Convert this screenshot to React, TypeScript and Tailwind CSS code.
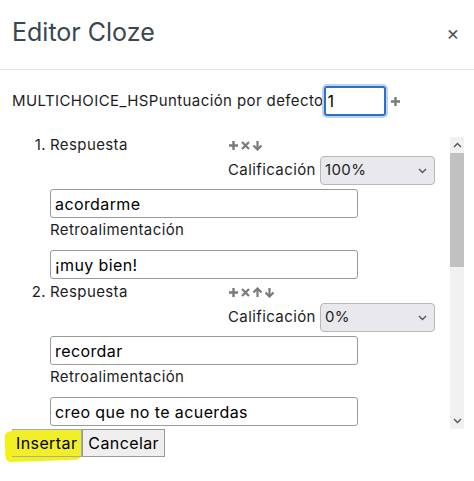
import React from 'react'

const FONT = { fontFamily: 'Inter, "Noto Sans", sans-serif' }

function Plus() {
  return (
    <svg width="11" height="11" viewBox="0 0 11 11" className="shrink-0">
      <path d="M5.5 1v9M1 5.5h9" stroke="#7a7a7a" strokeWidth="2.4" />
    </svg>
  )
}

function Cross() {
  return (
    <svg width="11" height="11" viewBox="0 0 11 11" className="shrink-0">
      <path d="M2 2l7 7M9 2l-7 7" stroke="#7a7a7a" strokeWidth="2.2" />
    </svg>
  )
}

function Down() {
  return (
    <svg width="11" height="11" viewBox="0 0 11 11" className="shrink-0">
      <path d="M5.5 1v8" stroke="#7a7a7a" strokeWidth="2.2" />
      <path d="M1.5 5.5l4 4 4-4" fill="none" stroke="#7a7a7a" strokeWidth="2.2" />
    </svg>
  )
}

function Up() {
  return (
    <svg width="11" height="11" viewBox="0 0 11 11" className="shrink-0">
      <path d="M5.5 2v8" stroke="#7a7a7a" strokeWidth="2.2" />
      <path d="M1.5 5.5l4-4 4 4" fill="none" stroke="#7a7a7a" strokeWidth="2.2" />
    </svg>
  )
}

function Chevron({ up }: { up?: boolean }) {
  return (
    <svg width="9" height="6" viewBox="0 0 9 6">
      <path d={up ? 'M1 5l3.5-3.5L8 5' : 'M1 1l3.5 3.5L8 1'} fill="none" stroke="#555" strokeWidth="1.4" />
    </svg>
  )
}

function Field({ value, className = '' }: { value: string; className?: string }) {
  return (
    <div className={`w-[308px] h-[29px] border border-[#9a9a9a] rounded-[3px] flex items-center px-[4px] text-[16px] text-black bg-white ${className}`}>
      {value}
    </div>
  )
}

function Answer({ n, value, feedback, grade, up }: { n: number; value: string; feedback: string; grade: string; up?: boolean }) {
  return (
    <div className="flex flex-col">
      <div className="flex h-5 items-center">
        <div className="w-[38px] text-right pr-[4px]">{n}.</div>
        <div className="w-[178px]">Respuesta</div>
        <div className="flex items-center gap-[1px]">
          <Plus />
          <Cross />
          {up && <Up />}
          <Down />
        </div>
      </div>
      <div className="flex items-center mt-[1px] pl-[216px]">
        <span className="w-[92px]">Calificación</span>
        <div className="w-[115px] h-[29px] bg-[#e9e9ed] border border-[#b8b8b8] rounded-[4px] flex items-center justify-between pl-[4px] pr-[7px]">
          <span>{grade}</span>
          <Chevron />
        </div>
      </div>
      <div className="pl-[38px] flex flex-col">
        <Field value={value} className="mt-[4px]" />
        <div className="mt-[2px] h-5 flex items-center">Retroalimentación</div>
        <Field value={feedback} className="mt-[10px]" />
      </div>
    </div>
  )
}

export default function App() {
  return (
    <div className="w-[474px] h-[481px] bg-white text-[15px] tracking-[0.4px] text-[#1d1d1d] overflow-hidden" style={FONT}>
      <div className="h-[70px] border-b border-[#e3e3e3] flex items-center justify-between pl-[12px] pr-[14px]">
        <h1 className="text-[25px] tracking-normal text-[#3a4750] font-normal -mt-[4px]">Editor Cloze</h1>
        <span className="text-[20px] text-[#555] -mt-[4px]">×</span>
      </div>

      <div className="px-[12px] pt-[16px]">
        <div className="flex items-center h-[30px]">
          <span>MULTICHOICE_HSPuntuación por defecto</span>
          <div className="w-[62px] h-[30px] border-2 border-[#2f6fc4] rounded-[3px] shadow-[0_0_0_2px_#bcd3f1] flex items-center pl-[2px] text-[16px] text-black">1</div>
          <span className="ml-[4px]"><Plus /></span>
        </div>

        <div className="flex mt-[19px] h-[294px] -mr-[2px]">
          <div className="flex-1 flex flex-col gap-[3px]">
            <Answer n={1} value="acordarme" feedback="¡muy bien!" grade="100%" />
            <Answer n={2} value="recordar" feedback="creo que no te acuerdas" grade="0%" up />
          </div>
          <div className="w-[14px] h-[292px] mt-[2px] bg-[#f1f1f1] flex flex-col">
            <div className="h-[16px] flex items-center justify-center"><Chevron up /></div>
            <div className="h-[114px] bg-[#c1c1c1]" />
            <div className="flex-1" />
            <div className="h-[16px] flex items-center justify-center"><Chevron /></div>
          </div>
        </div>

        <div className="flex items-center">
          <div className="relative">
            <div className="absolute -left-[7px] top-[1px] w-[76px] h-[31px] bg-[#f2f21a] rounded-[6px] -rotate-2" />
            <button className="relative h-[28px] px-[4px] bg-[#f0ef2a] border border-[#aaa] border-l-0 text-black text-[16px] tracking-[0.4px]" style={FONT}>Insertar</button>
          </div>
          <button className="h-[28px] px-[5px] bg-[#efefef] border border-[#999] text-black text-[16px] tracking-[0.4px]" style={FONT}>Cancelar</button>
        </div>
      </div>
    </div>
  )
}
